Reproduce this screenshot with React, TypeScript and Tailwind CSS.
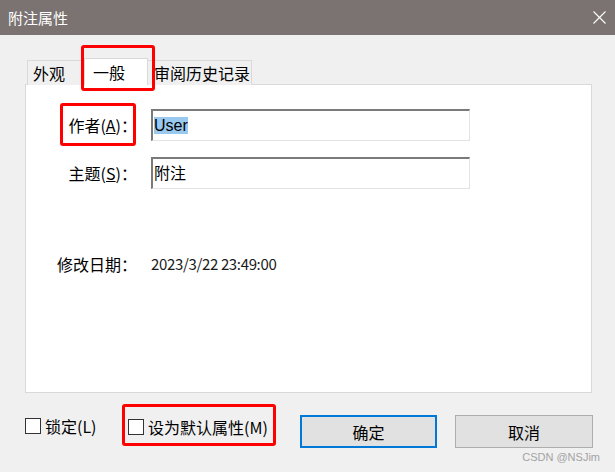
import React from "react";

const font = "font-['Noto_Sans_CJK_SC','Noto_Sans',sans-serif]";

function CloseIcon() {
  return (
    <svg width="13" height="13" viewBox="0 0 13 13" className="text-white">
      <path d="M0.5 0.5 L12.5 12.5 M12.5 0.5 L0.5 12.5" stroke="currentColor" strokeWidth="1.1" />
    </svg>
  );
}

function RedBox({ className }: { className: string }) {
  return <div className={`absolute border-[3px] border-[#ff0000] rounded-[3px] pointer-events-none ${className}`} />;
}

function Checkbox({ label }: { label: string }) {
  return (
    <div className="flex items-center gap-[4px]">
      <span className="w-[16px] h-[16px] border border-[#333333] bg-white" />
      <span className="text-[16px] leading-[20px] text-black">{label}</span>
    </div>
  );
}

export default function App() {
  return (
    <div className={`w-[615px] h-[472px] bg-[#f0f0f0] flex flex-col ${font}`}>
      {/* title bar */}
      <div className="h-[35px] bg-[#7a7371] flex items-center justify-between pl-[8px] pr-[9px]">
        <span className="text-[15px] text-white leading-[20px]">附注属性</span>
        <CloseIcon />
      </div>

      <div className="flex flex-col px-[25px] pt-[23px]">
        {/* tabs */}
        <div className="flex items-end h-[27px] pl-[2px] relative z-10 -mb-px">
          <div className="w-[57px] h-[25px] border border-b-0 border-[#d9d9d9] bg-[#f0f0f0] pl-[5px] text-[16px] leading-[24px] text-black">
            外观
          </div>
          <div className="relative w-[64px] h-[27px] border border-b-0 border-[#d9d9d9] bg-white pl-[8px] pt-[1px] text-[16px] leading-[24px] text-black">
            一般
            <RedBox className="-left-[4px] -top-[14px] w-[74px] h-[46px]" />
          </div>
          <div className="w-[104px] h-[25px] border border-b-0 border-l-0 border-[#d9d9d9] bg-[#f0f0f0] pl-[6px] text-[16px] leading-[24px] text-black whitespace-nowrap">
            审阅历史记录
          </div>
        </div>

        {/* panel */}
        <div className="w-[567px] h-[309px] bg-white border border-[#d9d9d9] pt-[24px] flex flex-col">
          <div className="flex items-center">
            <div className="w-[111px] flex justify-end">
              <div className="relative text-[16px] leading-[20px] text-black">
                作者(<span className="underline">A</span>)：
                <RedBox className="-left-[8px] -top-[12px] w-[76px] h-[43px]" />
              </div>
            </div>
            <div className="ml-[14px] w-[319px] h-[32px] border-t-2 border-l-2 border-r border-b border-t-[#7a7a7a] border-l-[#7a7a7a] border-r-[#e3e3e3] border-b-[#e3e3e3] pl-[1px] pt-[1px]">
              <span className="bg-[#99c9ef] text-[16px] leading-[20px] text-black font-['Liberation_Sans','Noto_Sans',sans-serif]">User</span>
            </div>
          </div>

          <div className="flex items-center mt-[16px]">
            <div className="w-[111px] flex justify-end">
              <div className="text-[16px] leading-[20px] text-black">
                主题(<span className="underline">S</span>)：
              </div>
            </div>
            <div className="ml-[14px] w-[319px] h-[32px] border-t-2 border-l-2 border-r border-b border-t-[#7a7a7a] border-l-[#7a7a7a] border-r-[#e3e3e3] border-b-[#e3e3e3] pl-[1px] pt-[1px]">
              <span className="text-[16px] leading-[22px] text-black">附注</span>
            </div>
          </div>

          <div className="flex items-center mt-[65px]">
            <div className="w-[111px] flex justify-end">
              <div className="text-[16px] leading-[20px] text-black">修改日期：</div>
            </div>
            <div className="ml-[14px] text-[15px] leading-[20px] tracking-[-0.35px] text-[#1a1a1a]">2023/3/22 23:49:00</div>
          </div>
        </div>

        {/* bottom row */}
        <div className="flex items-start mt-[22px] h-[33px]">
          <div className="w-[103px] shrink-0 mt-[1px]">
            <Checkbox label="锁定(L)" />
          </div>
          <div className="w-[172px] shrink-0 mt-[1px]">
            <div className="relative inline-block">
              <Checkbox label="设为默认属性(M)" />
              <RedBox className="-left-[6px] -top-[13px] w-[154px] h-[42px]" />
            </div>
          </div>
          <button className="shrink-0 w-[137px] h-[33px] border-2 border-[#0078d7] bg-[#e1e1e1] text-[16px] text-black">
            确定
          </button>
          <button className="shrink-0 ml-[18px] w-[138px] h-[33px] border border-[#adadad] bg-[#e1e1e1] text-[16px] text-black">
            取消
          </button>
        </div>

        <div className="flex justify-end mr-[-10px] mt-[2px]">
          <span className="text-[11px] leading-[14px] text-[#a3a3a3] font-['Liberation_Sans',sans-serif]">CSDN @NSJim</span>
        </div>
      </div>
    </div>
  );
}
